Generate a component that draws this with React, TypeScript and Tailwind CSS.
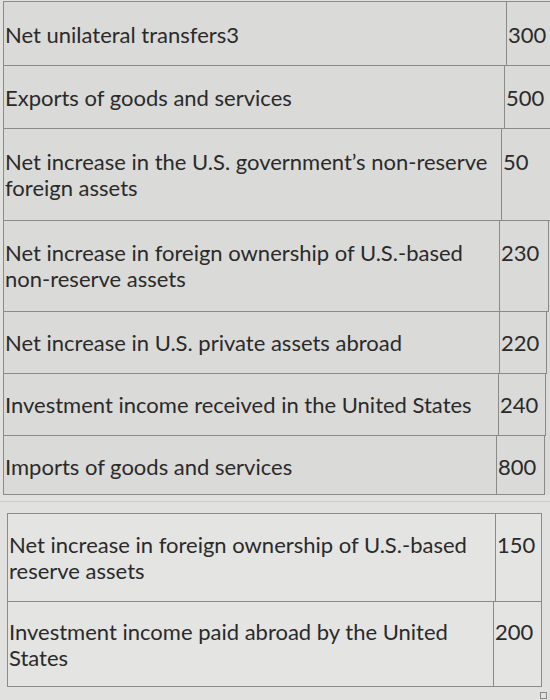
type Row = {
  label: string[]
  value: string
  h: number
  w: number
  div: number
  pt: number
}

const rowsTop: Row[] = [
  { label: ["Net unilateral transfers3"], value: "300", h: 64, w: 552, div: 502, pt: 20 },
  { label: ["Exports of goods and services"], value: "500", h: 63, w: 552, div: 500, pt: 19 },
  { label: ["Net increase in the U.S. government’s non-reserve", "foreign assets"], value: "50", h: 92, w: 552, div: 497, pt: 20 },
  { label: ["Net increase in foreign ownership of U.S.-based", "non-reserve assets"], value: "230", h: 91, w: 545, div: 495, pt: 19 },
  { label: ["Net increase in U.S. private assets abroad"], value: "220", h: 62, w: 543, div: 495, pt: 18 },
  { label: ["Investment income received in the United States"], value: "240", h: 62, w: 542, div: 494, pt: 18 },
  { label: ["Imports of goods and services"], value: "800", h: 59, w: 541, div: 492, pt: 18 },
]

const rowsBottom: Row[] = [
  { label: ["Net increase in foreign ownership of U.S.-based", "reserve assets"], value: "150", h: 88, w: 534, div: 487, pt: 18 },
  { label: ["Investment income paid abroad by the United", "States"], value: "200", h: 85, w: 534, div: 485, pt: 17 },
]

function TableRow({ row }: { row: Row }) {
  return (
    <div
      className="flex border-b border-r border-[#8a8a88]"
      style={{ height: row.h, width: row.w }}
    >
      {/* label */}
      <div className="pl-[1px] leading-[26px]" style={{ width: row.div, paddingTop: row.pt }}>
        {row.label.map((l) => (
          <div key={l} className="whitespace-nowrap">{l}</div>
        ))}
      </div>
      {/* value */}
      <div className="flex-1 border-l border-[#8a8a88] pl-[1px] leading-[26px]" style={{ paddingTop: row.pt }}>
        {row.value}
      </div>
    </div>
  )
}

export default function App() {
  return (
    <div className="w-[550px] h-[700px] overflow-hidden bg-[#e1e1df] text-[22px] text-[#2a2a2a] font-['Lato','Open_Sans',sans-serif]">
      {/* first table */}
      <div className="ml-[3px] mt-[1px] w-fit border-t border-l border-[#8a8a88] bg-[#dadad8]">
        {rowsTop.map((r) => (
          <TableRow key={r.value} row={r} />
        ))}
      </div>

      <div className="mt-[6px] h-px bg-[#cdcdcb]" />

      {/* second table */}
      <div className="ml-[7px] mt-[11px] w-fit border-t border-l border-[#8a8a88] bg-[#e4e4e2]">
        {rowsBottom.map((r) => (
          <TableRow key={r.value} row={r} />
        ))}
      </div>

      <div className="mt-[5px] flex justify-end pr-[3px]">
        <div className="w-[7px] h-[7px] border border-[#8a8a88]" />
      </div>
    </div>
  )
}
